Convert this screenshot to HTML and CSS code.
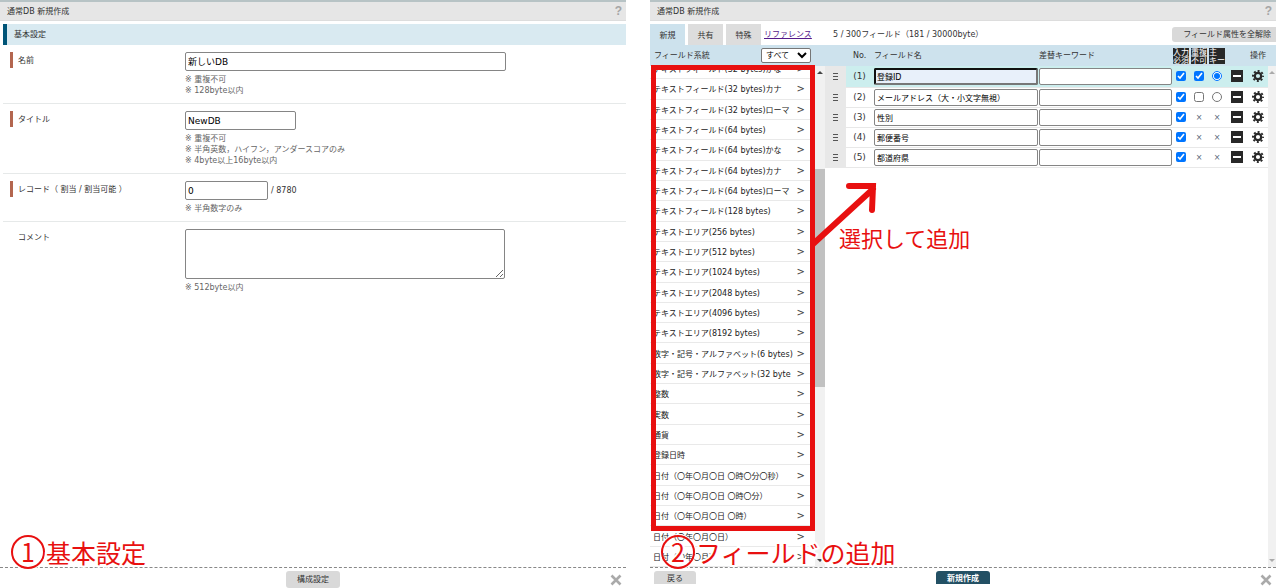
FILE: index.html
```html
<!DOCTYPE html>
<html lang="ja">
<head>
<meta charset="utf-8">
<title>通常DB 新規作成</title>
<link rel="stylesheet" href="styles.css">
</head>
<body>
<svg class="defs" aria-hidden="true">
  <symbol id="gear" viewBox="0 0 24 24"><g fill="none" stroke="#282828"><circle cx="12" cy="12" r="6.4" stroke-width="4.4"/><circle cx="12" cy="12" r="10" stroke-width="4" stroke-dasharray="3.93 3.924" stroke-dashoffset="1.96"/></g></symbol>
  <symbol id="close" viewBox="0 0 12 12"><path d="M1.5 1.5l9 9M10.5 1.5l-9 9" stroke="#aaa" stroke-width="2.6"/></symbol>
  <symbol id="minus" viewBox="0 0 12 12"><path fill="#282828" d="M0 0h12v12H0z"/><path fill="#fff" d="M2 5h8v2H2z"/></symbol>
  <symbol id="drag" viewBox="0 0 5 7"><path fill="#555" d="M0 0h5v1H0zM0 3h5v1H0zM0 6h5v1H0z"/></symbol>
</svg>
<main class="screens">
  <section class="panel">
    <header class="bar"><h1>通常DB 新規作成</h1><button class="help" type="button" aria-label="ヘルプ">?</button></header>
    <form class="form">
      <h2 class="section">基本設定</h2>
      <div class="row">
        <label class="label required" for="name">名前</label>
        <div><input class="text wide" id="name" value="新しいDB"><p class="note">※ 重複不可<br>※ 128byte以内</p></div>
      </div>
      <div class="row">
        <label class="label required" for="title">タイトル</label>
        <div><input class="text medium" id="title" value="NewDB"><p class="note">※ 重複不可<br>※ 半角英数，ハイフン，アンダースコアのみ<br>※ 4byte以上16byte以内</p></div>
      </div>
      <div class="row">
        <label class="label required" for="record">レコード（ 割当 / 割当可能 ）</label>
        <div><input class="text short" id="record" value="0"><span class="limit">/ 8780</span><p class="note">※ 半角数字のみ</p></div>
      </div>
      <div class="row last">
        <label class="label" for="comment">コメント</label>
        <div><textarea class="text area" id="comment"></textarea><p class="note">※ 512byte以内</p></div>
      </div>
    </form>
    <footer class="foot"><span></span><button class="btn" type="button">構成設定</button><button class="close" type="button" aria-label="閉じる"><svg><use href="#close"/></svg></button></footer>
    <p class="step"><span class="num">1</span>基本設定</p>
  </section>

  <section class="panel">
    <header class="bar"><h1>通常DB 新規作成</h1><button class="help" type="button" aria-label="ヘルプ">?</button></header>
    <nav class="tabs">
      <button class="tab active" type="button">新規</button><button class="tab" type="button">共有</button><button class="tab" type="button">特殊</button>
      <a class="ref" href="#">リファレンス</a>
      <span class="count">5 / 300フィールド（181 / 30000byte）</span>
      <button class="btn clear" type="button">フィールド属性を全解除</button>
    </nav>
    <div class="work">
      <div class="picker">
        <div class="filter"><label for="kind">フィールド系統</label><select id="kind"><option>すべて</option></select></div>
        <div class="scroller">
          <ul class="list">
            <li><button type="button"><span>テキストフィールド(32 bytes)かな</span></button></li>
            <li><button type="button"><span>テキストフィールド(32 bytes)カナ</span></button></li>
            <li><button type="button"><span>テキストフィールド(32 bytes)ローマ</span></button></li>
            <li><button type="button"><span>テキストフィールド(64 bytes)</span></button></li>
            <li><button type="button"><span>テキストフィールド(64 bytes)かな</span></button></li>
            <li><button type="button"><span>テキストフィールド(64 bytes)カナ</span></button></li>
            <li><button type="button"><span>テキストフィールド(64 bytes)ローマ</span></button></li>
            <li><button type="button"><span>テキストフィールド(128 bytes)</span></button></li>
            <li><button type="button"><span>テキストエリア(256 bytes)</span></button></li>
            <li><button type="button"><span>テキストエリア(512 bytes)</span></button></li>
            <li><button type="button"><span>テキストエリア(1024 bytes)</span></button></li>
            <li><button type="button"><span>テキストエリア(2048 bytes)</span></button></li>
            <li><button type="button"><span>テキストエリア(4096 bytes)</span></button></li>
            <li><button type="button"><span>テキストエリア(8192 bytes)</span></button></li>
            <li><button type="button"><span>数字・記号・アルファベット(6 bytes)</span></button></li>
            <li><button type="button"><span>数字・記号・アルファベット(32 byte</span></button></li>
            <li><button type="button"><span>整数</span></button></li>
            <li><button type="button"><span>実数</span></button></li>
            <li><button type="button"><span>通貨</span></button></li>
            <li><button type="button"><span>登録日時</span></button></li>
            <li><button type="button"><span>日付（〇年〇月〇日 〇時〇分〇秒）</span></button></li>
            <li><button type="button"><span>日付（〇年〇月〇日 〇時〇分）</span></button></li>
            <li><button type="button"><span>日付（〇年〇月〇日 〇時）</span></button></li>
            <li><button type="button"><span>日付（〇年〇月〇日）</span></button></li>
            <li><button type="button"><span>日付（〇年〇月）</span></button></li>
          </ul>
          <div class="track"><i class="up"></i><i class="thumb"></i><i class="down"></i></div>
        </div>
      </div>
      <div class="fields">
        <table class="grid">
          <colgroup><col class="c-drag"><col class="c-no"><col class="c-name"><col><col class="c-flag"><col class="c-flag"><col class="c-flag"><col class="c-del"><col class="c-gear"></colgroup>
          <thead>
            <tr><th></th><th>No.</th><th>フィールド名</th><th>差替キーワード</th><th><span class="chip">入力必須</span></th><th><span class="chip">重複不可</span></th><th><span class="chip">主<br>キー</span></th><th colspan="2" class="ops">操作</th></tr>
          </thead>
          <tbody>
            <tr class="current"><td class="drag"><svg><use href="#drag"/></svg></td><td class="no">(1)</td><td><input class="cell" aria-label="フィールド名 1" value="登録ID"></td><td><input class="cell" aria-label="差替キーワード 1"></td><td class="flag"><input type="checkbox" aria-label="入力必須 1" checked></td><td class="flag"><input type="checkbox" aria-label="重複不可 1" checked></td><td class="flag"><input type="radio" name="key" aria-label="主キー 1" checked></td><td class="flag"><button class="icon" type="button" aria-label="削除 1"><svg><use href="#minus"/></svg></button></td><td class="flag"><button class="icon" type="button" aria-label="設定 1"><svg><use href="#gear"/></svg></button></td></tr>
            <tr><td class="drag"><svg><use href="#drag"/></svg></td><td class="no">(2)</td><td><input class="cell" aria-label="フィールド名 2" value="メールアドレス（大・小文字無視）"></td><td><input class="cell" aria-label="差替キーワード 2"></td><td class="flag"><input type="checkbox" aria-label="入力必須 2" checked></td><td class="flag"><input type="checkbox" aria-label="重複不可 2"></td><td class="flag"><input type="radio" name="key" aria-label="主キー 2"></td><td class="flag"><button class="icon" type="button" aria-label="削除 2"><svg><use href="#minus"/></svg></button></td><td class="flag"><button class="icon" type="button" aria-label="設定 2"><svg><use href="#gear"/></svg></button></td></tr>
            <tr><td class="drag"><svg><use href="#drag"/></svg></td><td class="no">(3)</td><td><input class="cell" aria-label="フィールド名 3" value="性別"></td><td><input class="cell" aria-label="差替キーワード 3"></td><td class="flag"><input type="checkbox" aria-label="入力必須 3" checked></td><td class="flag">×</td><td class="flag">×</td><td class="flag"><button class="icon" type="button" aria-label="削除 3"><svg><use href="#minus"/></svg></button></td><td class="flag"><button class="icon" type="button" aria-label="設定 3"><svg><use href="#gear"/></svg></button></td></tr>
            <tr><td class="drag"><svg><use href="#drag"/></svg></td><td class="no">(4)</td><td><input class="cell" aria-label="フィールド名 4" value="郵便番号"></td><td><input class="cell" aria-label="差替キーワード 4"></td><td class="flag"><input type="checkbox" aria-label="入力必須 4" checked></td><td class="flag">×</td><td class="flag">×</td><td class="flag"><button class="icon" type="button" aria-label="削除 4"><svg><use href="#minus"/></svg></button></td><td class="flag"><button class="icon" type="button" aria-label="設定 4"><svg><use href="#gear"/></svg></button></td></tr>
            <tr><td class="drag"><svg><use href="#drag"/></svg></td><td class="no">(5)</td><td><input class="cell" aria-label="フィールド名 5" value="都道府県"></td><td><input class="cell" aria-label="差替キーワード 5"></td><td class="flag"><input type="checkbox" aria-label="入力必須 5" checked></td><td class="flag">×</td><td class="flag">×</td><td class="flag"><button class="icon" type="button" aria-label="削除 5"><svg><use href="#minus"/></svg></button></td><td class="flag"><button class="icon" type="button" aria-label="設定 5"><svg><use href="#gear"/></svg></button></td></tr>
          </tbody>
        </table>
        <div class="side"><div class="track idle"><i class="up"></i><i class="down"></i></div></div>
      </div>
    </div>
    <footer class="foot cut"><button class="btn back" type="button">戻る</button><button class="btn primary" type="button">新規作成</button><button class="close" type="button" aria-label="閉じる"><svg><use href="#close"/></svg></button></footer>
    <div class="frame"></div>
    <svg class="arrow" viewBox="0 0 66 66" aria-hidden="true"><path d="M0 62L60 7M36 4h24l-1 24" fill="none" stroke="#e81010" stroke-width="6" stroke-linecap="round"/></svg>
    <p class="hint">選択して追加</p>
    <p class="step"><span class="num">2</span>フィールドの追加</p>
  </section>
</main>
</body>
</html>
```

FILE: styles.css
```css
* { box-sizing: border-box; }
body, h1, h2, p, ul { margin: 0; padding: 0; }
body, button, input, select, textarea {
  font-family: "DejaVu Sans", "Noto Sans CJK JP", sans-serif;
  font-size: 8px;
  color: #333;
}
body { background: #fff; line-height: 11px; }
h1, h2, th { font-size: 8px; font-weight: normal; }
button { padding: 0; border: 0; background: none; }
.defs { display: none; }

.screens { display: flex; gap: 24px; height: 100vh; overflow: hidden; }
.panel { position: relative; display: flex; flex-direction: column; flex: 1; min-width: 0; }

.bar {
  display: flex; align-items: center; justify-content: space-between;
  height: 21px; padding: 0 4px 0 7px;
  background: #e6e6e6; border-top: 2px solid #b7c3c5; border-bottom: 1px solid #ddd;
}
.help { font: bold 12px "Liberation Sans", sans-serif; color: #a5a5a5; }

/* Basic settings */
.form { flex: 1; padding: 3px 0 0 3px; }
.section {
  height: 21px; padding-left: 7px; line-height: 21px;
  background: #d9eaf1; border-left: 4px solid #005578;
}
.row { display: grid; grid-template-columns: 182px 1fr; padding: 7px 0; border-bottom: 1px solid #e6e9e9; }
.row.last { border-bottom: 0; }
.label { height: 16px; margin-left: 7px; padding-left: 5px; line-height: 17px; border-left: 3px solid transparent; }
.required { border-left-color: #b3664f; }
.text {
  display: inline-block; height: 19px; padding: 0 2px; vertical-align: top;
  font-size: 9px; color: #000; background: #fff; border: 1px solid #858585; border-radius: 2px;
}
.wide { width: 321px; }
.medium { width: 111px; }
.short { width: 83px; }
.area { width: 320px; height: 50px; }
.limit { padding-left: 3px; line-height: 19px; }
.note { margin-top: 3px; color: #666; }

/* Footer */
.foot {
  display: grid; grid-template-columns: 1fr auto 1fr; align-items: start;
  height: 21px; padding: 3px 4px 0; border-top: 1px dashed #888;
}
.btn { height: 17px; padding: 0 10px; line-height: 17px; background: #d9d9d9; border-radius: 3px; }
.foot .btn { min-width: 54px; }
.foot .back { justify-self: start; min-width: 42px; }
.cut .btn { height: 13px; line-height: 15px; border-radius: 3px 3px 0 0; }
.foot .primary { color: #fff; font-weight: bold; background: #235064; }
.close { justify-self: end; width: 12px; height: 12px; margin-top: 3px; }
.close svg, .icon svg { display: block; width: 12px; height: 12px; }

/* Tabs */
.tabs { display: flex; align-items: center; height: 24px; padding-top: 3px; }
.tab { width: 35px; height: 21px; margin-right: 3px; background: #ddd; }
.tab.active { background: #cde2ed; }
.ref { color: #551a8b; width: 66px; }
.count { flex: 1; padding-left: 3px; }
.clear { padding: 0 5px 0 11px; height: 15px; line-height: 15px; border-radius: 3px 0 0 3px; }

/* Field picker */
.work { display: flex; flex: 1; min-height: 0; }
.picker { display: flex; flex-direction: column; width: 175px; }
.filter {
  display: flex; align-items: center; justify-content: space-between;
  height: 21px; padding: 0 14px 0 4px; background: #cde2ed;
}
.filter select { width: 50px; height: 15px; padding: 0; background: #fff; border: 1px solid #767676; border-radius: 2px; color: #000; }
.scroller { display: flex; flex: 1; min-height: 0; overflow: hidden; }
.list {
  display: grid; grid-auto-rows: 1fr; flex: 1; height: calc(100% + 7px);
  margin-top: -7px; list-style: none;
}
.list li { border-bottom: 1px solid #e9e9e9; }
.list button { display: flex; align-items: center; justify-content: space-between; width: 100%; height: 100%; padding: 0 10px 0 3px; text-align: left; color: #222; }
.list span { white-space: nowrap; }
.list button::after { content: ">"; font-family: "DejaVu Sans", sans-serif; font-size: 10px; color: #444; }
.track { display: flex; flex-direction: column; align-items: center; width: 10px; padding: 5px 0; background: #f1f1f1; }
.thumb { width: 10px; height: 218px; margin: 95px 0 auto; background: #c1c1c1; }
.up, .down { border: 3px solid transparent; }
.up { border-top: 0; border-bottom-color: #444; }
.down { border-bottom: 0; border-top-color: #444; }
.idle { justify-content: space-between; flex: 1; width: 8px; }
.idle .up { border-bottom-color: #aaa; }
.idle .down { border-top-color: #aaa; }

/* Field table */
.fields { display: flex; flex: 1; min-width: 0; align-items: stretch; }
.side { display: flex; flex-direction: column; border-top: 21px solid #cde2ed; }
.grid { flex: 1; align-self: flex-start; width: 0; table-layout: fixed; border-collapse: collapse; }
.grid th, .grid td { padding: 0; text-align: left; white-space: nowrap; }
.grid thead tr { height: 21px; background: #cde2ed; }
.grid th:nth-child(2) { padding-left: 7px; }
.grid th:nth-child(3), .grid th:nth-child(4) { padding-left: 1px; }
.grid tbody tr { height: 20px; border-bottom: 1px solid #e8e8e8; }
.grid tbody tr.current { height: 21px; background: #cceeee; }
.c-drag { width: 21px; }
.c-no { width: 27px; }
.c-name { width: 165px; }
.c-flag { width: 18px; }
.c-del { width: 22px; }
.c-gear { width: 20px; }
.grid .ops { padding-right: 2px; text-align: right; }
.grid .drag { background: #e8e8e8; }
.drag svg { display: block; width: 5px; height: 7px; margin: 0 auto; }
.grid .no { text-align: center; font-size: 9px; }
.grid .flag { text-align: center; color: #567; }
.cell {
  display: block; width: calc(100% - 1px); height: 17px; margin-left: 1px; padding: 0 2px;
  color: #000; background: #fff; border: 1px solid #858585; border-radius: 2px;
}
.current td:nth-child(3) .cell { background: #e8f0fa; border: 2px solid #777; border-top-color: #111; border-left-color: #111; padding: 0 1px; }
.flag input { display: block; width: 10px; height: 10px; margin: 0 auto; }
.icon { display: block; width: 12px; height: 12px; margin: 0 auto; }
.chip {
  display: block; width: 16px; height: 16px; margin: 0 auto;
  font-family: "Noto Sans CJK JP", sans-serif;
  line-height: 8px; color: #fff; background: #282828; white-space: normal; word-break: break-all;
}

/* Callouts */
.frame { position: absolute; left: 1px; top: 65px; width: 164px; height: 466px; border: 5px solid #e81010; }
.arrow { position: absolute; left: 163px; top: 182px; width: 66px; height: 66px; }
.hint, .step {
  position: absolute; color: #e81010; white-space: nowrap;
  font-family: "Noto Sans CJK JP", sans-serif;
  -webkit-text-stroke: 4px #fff; paint-order: stroke fill;
}
.hint { left: 189px; top: 225px; font-size: 22px; line-height: 24px; }
.step { display: flex; align-items: center; gap: 1px; left: 11px; bottom: 19px; font-size: 25px; line-height: 34px; }
.num { width: 34px; height: 34px; line-height: 29px; text-align: center; border: 2px solid #e81010; border-radius: 50%; box-shadow: 0 0 0 1px #fff; }
```
